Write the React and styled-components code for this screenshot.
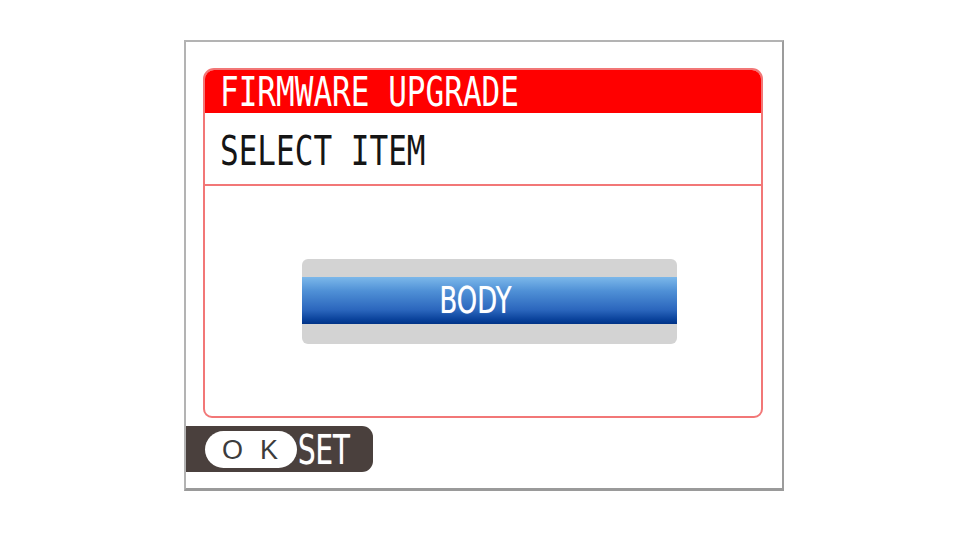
import React from "react";
import styled, { createGlobalStyle } from "styled-components";

const Global = createGlobalStyle`
  html, body { margin: 0; padding: 0; background: #fff; }
  body { width: 970px; height: 546px; overflow: hidden; font-family: "DejaVu Sans", sans-serif; }
`;

const Page = styled.div`
  padding: 40px 0 0 184px;
`;

const Frame = styled.div`
  width: 596px;
  height: 446px;
  border-style: solid;
  border-color: #b3b3b3 #9c9c9c #9a9a9a #b3b3b3;
  border-width: 2px 2px 3px 2px;
  background: #fff;
  display: flex;
  flex-direction: column;
`;

const Panel = styled.div`
  margin: 26px 0 0 17px;
  width: 560px;
  height: 350px;
  box-sizing: border-box;
  border: 2px solid #f27777;
  border-radius: 11px 11px 9px 9px;
  display: flex;
  flex-direction: column;
  overflow: hidden;
`;

const Header = styled.div`
  height: 45px;
  margin: -2px -2px 0;
  padding: 0 0 0 17px;
  background: #ff0000;
  border-radius: 10px 10px 0 0;
  display: flex;
  align-items: center;
  color: #fff;
`;

const Subtitle = styled.div`
  height: 71px;
  padding-left: 15px;
  border-bottom: 2px solid #f27777;
  display: flex;
  align-items: center;
  color: #151515;
`;

const MonoText = styled.span`
  display: inline-block;
  font-family: "DejaVu Sans Mono", monospace;
  font-size: 41px;
  line-height: 1;
  white-space: pre;
  transform: scaleX(0.757);
  transform-origin: left center;
  margin-top: ${(p) => p.$dy || 0}px;
`;

const Content = styled.div`
  flex: 1;
  display: flex;
  align-items: center;
  justify-content: center;
  padding-left: 13px;
`;

const ItemButton = styled.div`
  width: 375px;
  height: 85px;
  box-sizing: border-box;
  background: #d3d3d3;
  border-radius: 6px;
  padding: 18px 0 20px;
  display: flex;
`;

const Band = styled.div`
  flex: 1;
  background: linear-gradient(
    to bottom,
    #7cb8ea 0%,
    #4f90d6 30%,
    #2b66bd 70%,
    #073f98 92%,
    #003286 100%
  );
  display: flex;
  align-items: center;
  justify-content: center;
  padding-right: 28px;
  color: #fff;
`;

const NarrowText = styled.span`
  display: inline-block;
  font-family: "DejaVu Sans", sans-serif;
  font-size: ${(p) => p.$size}px;
  line-height: 1;
  transform: scaleX(${(p) => p.$sx});
  transform-origin: ${(p) => p.$origin || "center"} center;
  margin-top: ${(p) => p.$dy || 0}px;
  color: ${(p) => p.$color || "#fff"};
  text-shadow: 0 0 1px rgba(255, 255, 255, 0.6);
`;

const Footer = styled.div`
  margin-top: 8px;
  width: 187px;
  height: 46px;
  background: #4a403d;
  border-radius: 0 11px 11px 0;
  display: flex;
  align-items: center;
  padding-left: 19px;
  box-sizing: border-box;
`;

const OkPill = styled.div`
  width: 92px;
  height: 37px;
  border-radius: 19px;
  background: #fff;
  display: flex;
  align-items: center;
  justify-content: center;
  gap: 17px;
  padding-right: 2px;
  box-sizing: border-box;
`;

const OkLetter = styled.span`
  font-family: "Liberation Sans", sans-serif;
  font-size: 27px;
  line-height: 1;
  color: #3c3c3c;
  margin-top: 2px;
`;

const SetWrap = styled.div`
  width: 60px;
  display: flex;
  align-items: center;
  margin-left: 1px;
`;

export default function App() {
  return (
    <>
      <Global />
      <Page>
        <Frame>
          <Panel>
            <Header>
              <MonoText $dy={4}>FIRMWARE UPGRADE</MonoText>
            </Header>
            <Subtitle>
              <MonoText $dy={6}>SELECT ITEM</MonoText>
            </Subtitle>
            <Content>
              <ItemButton>
                <Band>
                  <NarrowText $size={37} $sx={0.7} $dy={0}>
                    BODY
                  </NarrowText>
                </Band>
              </ItemButton>
            </Content>
          </Panel>
          <Footer>
            <OkPill>
              <OkLetter>O</OkLetter>
              <OkLetter>K</OkLetter>
            </OkPill>
            <SetWrap>
              <NarrowText $size={41} $sx={0.675} $origin="left" $dy={2}>
                SET
              </NarrowText>
            </SetWrap>
          </Footer>
        </Frame>
      </Page>
    </>
  );
}
